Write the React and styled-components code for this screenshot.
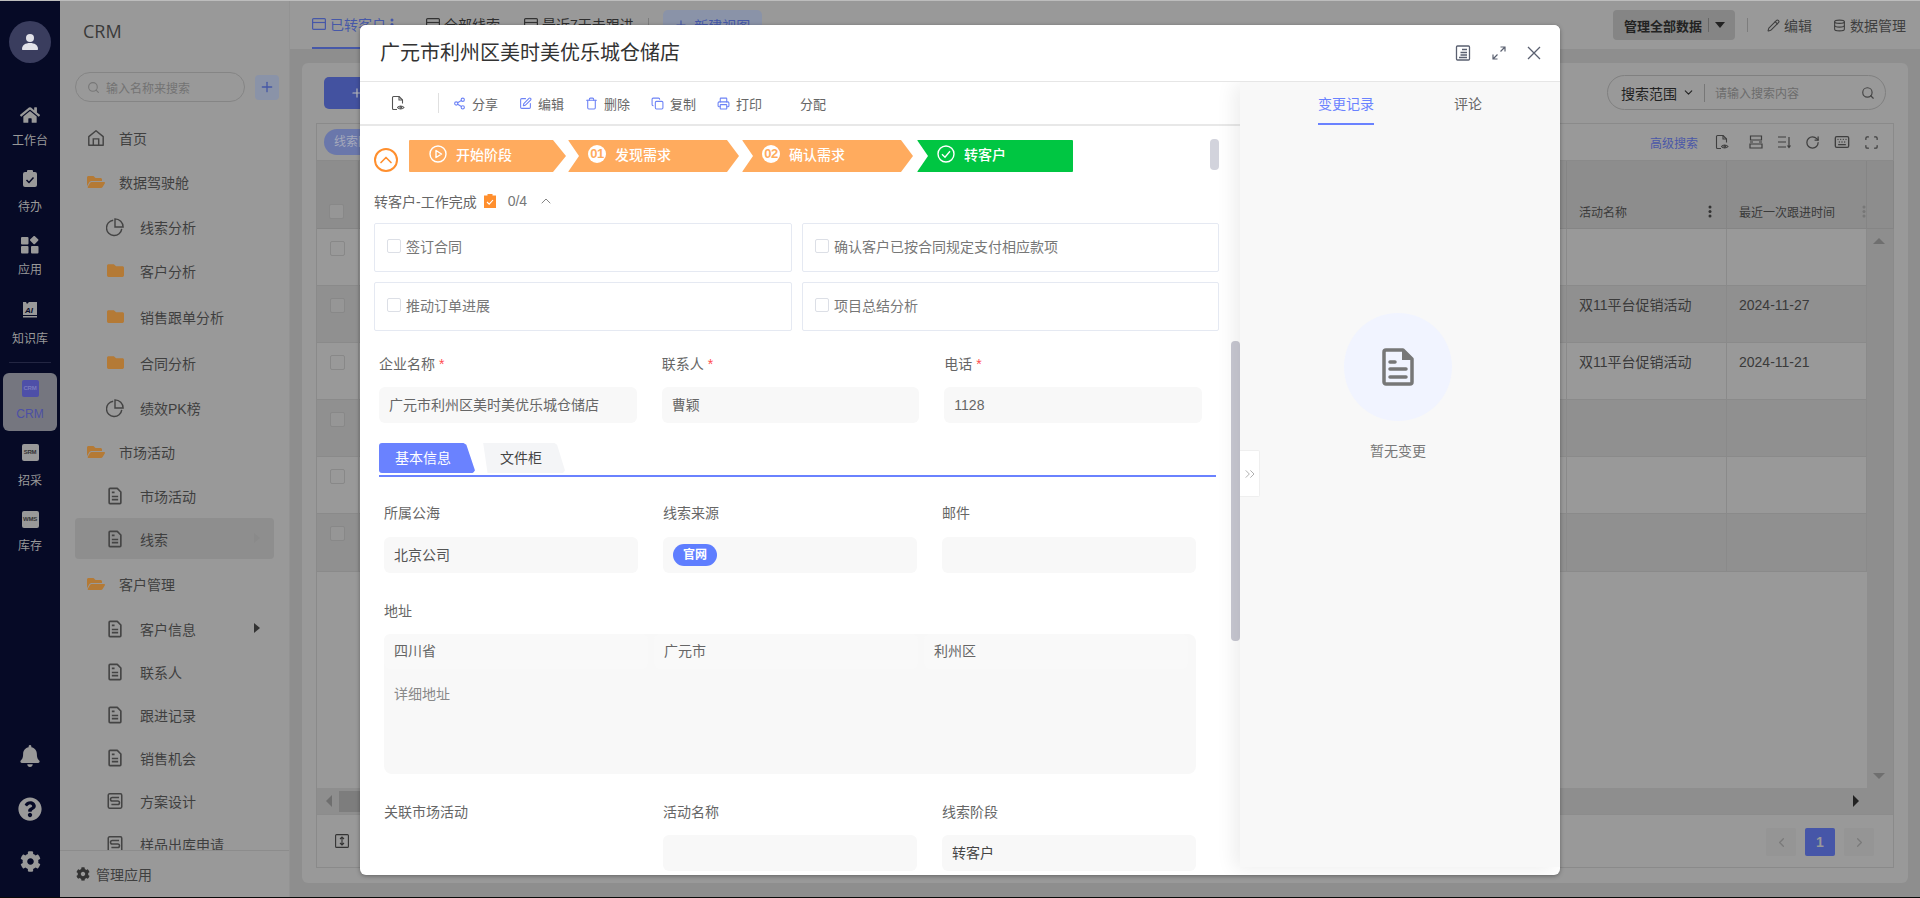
import React from 'react';
import styled, { createGlobalStyle } from 'styled-components';
import {
  FaHome, FaBell, FaQuestionCircle, FaCog, FaFolder, FaFolderOpen,
} from 'react-icons/fa';
import {
  Share2, SquarePen, Trash, Copy, Printer, ChevronUp, ChevronDown, ChevronLeft, ChevronRight,
  Search, Plus, Pencil, Database, ChevronsRight, RotateCw, Keyboard, Scan,
} from 'lucide-react';

const Global = createGlobalStyle`
  html, body { margin: 0; padding: 0; height: 100%; overflow: hidden; }
  body { font-family: "Liberation Sans", "Noto Sans CJK SC", sans-serif; font-size: 14px; color: #333; }
  * { box-sizing: border-box; }
`;

const Page = styled.div`
  position: relative; width: 1920px; height: 898px; display: flex; overflow: hidden;
  background: #8e8e8e; border-top: 1px solid #bdbdbd; border-bottom: 1px solid #0a0a0a;
`;

/* ---------- rail ---------- */
const Rail = styled.nav`
  width: 60px; flex: none; background: #060a26; display: flex; flex-direction: column; align-items: center;
  padding-top: 20px; color: #999;
`;
const Avatar = styled.div`
  width: 42px; height: 42px; border-radius: 50%; background: #3a3d5e; display: flex; align-items: center; justify-content: center;
  margin-bottom: 42px; flex: none;
`;
const RailItem = styled.div`
  width: 54px; height: ${p => p.$h || 65}px; display: flex; flex-direction: column; align-items: center; justify-content: flex-start;
  border-radius: 6px; font-size: 12px; line-height: 16px; color: ${p => p.$active ? '#4c4fa6' : '#999'};
  background: ${p => p.$active ? '#75767f' : 'transparent'}; flex: none;
  padding-top: ${p => p.$pt ?? 0}px; gap: ${p => p.$gap ?? 8}px;
`;
const RailDivider = styled.div`
  width: 42px; height: 1px; background: #232642; margin: 3px 0 10px; flex: none;
`;
const AppIcon = styled.div`
  width: 17px; height: 17px; border-radius: 2px; background: ${p => p.$bg || '#999'}; color: ${p => p.$fg || '#333'};
  font-size: 6px; font-weight: 700; line-height: 17px; text-align: center; letter-spacing: -0.2px; overflow: hidden;
`;
const RailBottom = styled.div`
  margin-top: auto; display: flex; flex-direction: column; align-items: center; gap: 30px; padding-bottom: 25px;
`;

/* ---------- side nav ---------- */
const Side = styled.aside`
  width: 230px; flex: none; background: #999; display: flex; flex-direction: column; height: 100%;
  border-right: 1px solid #939393;
`;
const SideTitle = styled.div`
  font-size: 18px; color: #3a3a3a; line-height: 24px; padding: 18px 0 0 23px; height: 71px; font-family: "Open Sans", "Liberation Sans", sans-serif;
`;
const SearchRow = styled.div`
  display: flex; align-items: center; gap: 10px; padding-left: 15px; height: 30px; flex: none;
`;
const SearchBox = styled.div`
  width: 170px; height: 30px; border: 1px solid #858585; border-radius: 15px; display: flex; align-items: center; gap: 6px;
  padding-left: 11px; color: #737373; font-size: 12px;
`;
const AddBox = styled.div`
  width: 24px; height: 25px; border-radius: 4px; background: #8a93a8; color: #4658a6; display: flex; align-items: center; justify-content: center;
`;
const MenuClip = styled.div`
  flex: 1; overflow: hidden; padding-top: 15px;
`;
const MenuRow = styled.div`
  height: 41px; flex: none; margin: ${p => p.$gap || 0}px 15px 0 15px; padding-left: ${p => p.$sub ? 31 : 12}px; display: flex; align-items: center;
  color: #3f3f3f; border-radius: 4px; background: ${p => p.$active ? '#8e8e8e' : 'transparent'}; position: relative; font-size: 14px;
`;
const MenuIcon = styled.span`
  width: 18px; height: 18px; display: flex; align-items: center; justify-content: center; margin-right: ${p => p.$sub ? 16 : 14}px; flex: none;
`;
const Arrow = styled.span`
  position: absolute; right: 14px; top: 15px; width: 0; height: 0; border-left: 6px solid ${p => p.$c}; border-top: 5px solid transparent; border-bottom: 5px solid transparent;
`;
const SideFoot = styled.div`
  height: 47px; flex: none; border-top: 1px solid #8c8c8c; display: flex; align-items: center; gap: 6px; padding-left: 16px; color: #3f3f3f;
`;

/* ---------- main backdrop ---------- */
const Main = styled.main`
  flex: 1; min-width: 0; display: flex; flex-direction: column; height: 100%;
`;
const TopBar = styled.div`
  height: 48px; flex: none; background: #999; display: flex; align-items: center; padding: 0 14px 0 22px; color: #2e2e2e;
`;
const TopTab = styled.div`
  display: flex; align-items: center; gap: 4px; height: 48px; margin-right: ${p => p.$mr}px; color: ${p => p.$on ? '#4658a8' : '#2e2e2e'};
  border-bottom: 2px solid ${p => p.$on ? '#4658a8' : 'transparent'};
`;
const TopDivider = styled.span`
  width: 1px; height: 14px; background: #7d7d7d; margin: ${p => p.$m};
`;
const NewView = styled.div`
  width: 99px; height: 30px; border-radius: 5px; background: #8a93a8; color: #4658a8; display: flex; align-items: center; justify-content: center; gap: 6px;
`;
const TopRight = styled.div`
  margin-left: auto; display: flex; align-items: center; color: #3f3f3f;
`;
const ManageBtn = styled.div`
  width: 122px; height: 30px; border-radius: 4px; background: #858585; display: flex; align-items: center; padding-left: 11px; color: #222; font-weight: 700; font-size: 13px;
`;
const Caret = styled.span`
  width: 0; height: 0; border-top: 6px solid #222; border-left: 5px solid transparent; border-right: 5px solid transparent; margin-left: 6px;
`;
const ManageSep = styled.span`
  width: 1px; height: 14px; background: #666; margin-left: 6px;
`;
const TopAction = styled.div`
  display: flex; align-items: center; gap: 4px; margin-left: ${p => p.$ml}px;
`;
const CardWrap = styled.div`
  flex: 1; min-height: 0; padding: 14px 12px 14px 12px;
`;
const Card = styled.div`
  height: 100%; background: #999; border-radius: 6px; padding: 0 14px 15px 14px; display: flex; flex-direction: column;
`;
const CardTop = styled.div`
  height: 60px; flex: none; display: flex; align-items: flex-start; justify-content: space-between; padding: 12px 8px 0 8px;
`;
const PrimaryBtn = styled.div`
  width: 110px; height: 32px; margin-top: 2px; border-radius: 5px; background: #4352a0; color: #bbb; padding-left: 26px; display: flex; align-items: center;
`;
const RangeSearch = styled.div`
  width: 279px; height: 35px; border: 1px solid #808080; border-radius: 18px; display: flex; align-items: center; padding-left: 13px; color: #222;
`;
const RangeSep = styled.span`
  width: 1px; height: 18px; background: #777; margin: 0 10px 0 9px;
`;
const Placeholder = styled.span`
  font-size: 12px; color: #6c6c6c; flex: 1;
`;
const Table = styled.div`
  flex: 1; border: 1px solid #8a8a8a; display: flex; flex-direction: column; min-height: 0;
`;
const TableBar = styled.div`
  height: 37px; flex: none; display: flex; align-items: center; padding: 0 14px 0 7px; border-bottom: 1px solid #8a8a8a;
`;
const Pill = styled.div`
  width: 90px; height: 26px; border-radius: 13px; background: #6a77ab; color: #a5a9bb; font-size: 12px; padding-left: 10px; line-height: 26px;
`;
const BarRight = styled.div`
  margin-left: auto; display: flex; align-items: center; gap: 14px; color: #3f3f3f;
`;
const AdvLink = styled.span`
  font-size: 12px; color: #4a57a8; margin-right: 2px;
`;
const BarFile = styled.span`
  display: flex; margin-right: 5px;
`;
const Grid = styled.div`
  display: grid; grid-template-columns: 42px 1fr 160px 140px 26px; flex: none;
`;
const HeadCell = styled.div`
  height: 68px; background: #8d8d8d; border-right: 1px solid #858585; border-bottom: 1px solid #858585; display: flex; align-items: center;
  padding: 34px ${p => p.$pr ?? 14}px 0 12px; font-size: 12px; color: #3a3a3a; justify-content: space-between;
`;
const Cell = styled.div`
  height: ${p => p.$h || 57}px; background: ${p => p.$dark ? '#909090' : '#999'}; border-right: 1px solid #8a8a8a; border-bottom: 1px solid #8a8a8a;
  padding: 9px 0 0 12px; line-height: 20px; color: #3a3a3a;
`;
const ScrollCell = styled.div`
  height: ${p => p.$h || 57}px; background: #8e8e8e;
`;
const CheckCell = styled.div`
  width: 15px; height: 15px; border: 1px solid #888; background: ${p => p.$fill || 'transparent'}; border-radius: 2px; margin: ${p => p.$m || '3px 0 0 1px'};
`;
const TableFill = styled.div`
  flex: 1; position: relative; min-height: 0;
`;
const VTrack = styled.div`
  position: absolute; right: 0; top: -343px; bottom: 0; width: 26px; pointer-events: none;
`;
const VTrackBg = styled.div`
  position: absolute; right: 0; top: 0; bottom: 0; width: 26px; background: #8e8e8e;
`;
const TriUp = styled.span`
  position: absolute; left: 6px; top: 9px; width: 0; height: 0; border-bottom: 6px solid #6f6f6f; border-left: 6px solid transparent; border-right: 6px solid transparent;
`;
const TriDown = styled.span`
  position: absolute; left: 6px; bottom: 9px; width: 0; height: 0; border-top: 6px solid #6f6f6f; border-left: 6px solid transparent; border-right: 6px solid transparent;
`;
const HTrack = styled.div`
  height: 26px; flex: none; background: #8e8e8e; position: relative; display: flex; align-items: center; padding-left: 9px;
`;
const TriLeft = styled.span`
  width: 0; height: 0; border-right: 6px solid #6f6f6f; border-top: 6px solid transparent; border-bottom: 6px solid transparent;
`;
const HThumb = styled.span`
  width: 30px; height: 21px; background: #7d7d7d; margin-left: 7px;
`;
const TriRight = styled.span`
  position: absolute; right: 34px; top: 7px; width: 0; height: 0; border-left: 6px solid #222; border-top: 6px solid transparent; border-bottom: 6px solid transparent;
`;
const TableFoot = styled.div`
  height: 53px; flex: none; display: flex; align-items: center; padding: 0 19px 0 18px; border-top: 1px solid #8c8c8c;
`;
const Pager = styled.div`
  margin-left: auto; display: flex; gap: 9px; padding-top: 2px;
`;
const PageBtn = styled.div`
  width: 30px; height: 28px; border-radius: 2px; background: ${p => p.$on ? '#4656a8' : '#959595'}; color: ${p => p.$on ? '#999' : '#7a7a7a'}; font-weight: 700; font-size: 14px;
  display: flex; align-items: center; justify-content: center;
`;

/* ---------- modal ---------- */
const Modal = styled.section`
  position: absolute; left: 360px; top: 24px; width: 1200px; height: 850px; background: #fff; border-radius: 6px; overflow: hidden;
  display: flex; flex-direction: column; box-shadow: 0 1px 4px rgba(0,0,0,.35);
`;
const ModalHead = styled.header`
  height: 57px; flex: none; border-bottom: 1px solid #e6e6e6; display: flex; align-items: center; padding: 0 19px 0 20px;
  background: #fff; position: relative; z-index: 1;
`;
const ModalTitle = styled.h1`
  margin: 0; font-size: 20px; font-weight: 400; color: #333; line-height: 28px;
`;
const HeadIcons = styled.div`
  margin-left: auto; display: flex; align-items: center; gap: 21px; color: #5a6070;
`;
const ModalBody = styled.div`
  flex: 1; display: flex; min-height: 0;
`;
const LeftPane = styled.div`
  width: 880px; flex: none; position: relative; display: flex; flex-direction: column; overflow: hidden;
`;
const Toolbar = styled.div`
  height: 44px; flex: none; border-bottom: 2px solid #e8e8e8; display: flex; align-items: center; color: #666; font-size: 13px;
  padding-left: 30px;
`;
const ToolSep = styled.span`
  width: 1px; height: 20px; background: #e0e0e0; margin: 0 14px 0 32px;
`;
const ToolBtn = styled.div`
  display: flex; align-items: center; gap: 6px; margin-right: ${p => p.$mr ?? 21}px; color: #666;
`;
const Content = styled.div`
  padding: 14px 0 0 14px;
`;
const StageRow = styled.div`
  display: flex; align-items: center; height: 32px;
`;
const StageToggle = styled.div`
  width: 24px; height: 24px; border-radius: 50%; border: 2px solid #ff8f2e; color: #ff8f2e; display: flex; align-items: center; justify-content: center;
  margin: 7px 11px 0 0; flex: none;
`;
const Step = styled.div`
  width: ${p => p.$w}px; height: 32px; margin-left: ${p => p.$ml || 0}px; background: ${p => p.$c}; color: #fff; font-weight: 500; font-size: 14px; flex: none;
  display: flex; align-items: center; gap: 9px; padding: 0 0 5px 20px; border-radius: 1px;
  clip-path: polygon(${p => p.$shape});
`;
const StepNum = styled.span`
  width: 18px; height: 18px; border-radius: 50%; background: #fff; color: #ffab5e; font-size: 13px; line-height: 18px; text-align: center; letter-spacing: -0.5px; font-weight: 700;
`;
const WorkRow = styled.div`
  height: 20px; margin-top: 19px; display: flex; align-items: center; color: #666;
`;
const WorkCount = styled.span`
  color: #777; margin: 0 11px 0 12px;
`;
const WorkSpacer = styled.span`
  width: 7px;
`;
const TaskGrid = styled.div`
  margin-top: 12px; width: 845px; display: grid; grid-template-columns: 418px 417px; gap: 10px;
`;
const TaskCard = styled.div`
  height: 49px; border: 1px solid #e5e9f2; border-radius: 2px; display: flex; align-items: center; padding: 0 0 4px 12px; gap: 5px; color: #777;
`;
const Check = styled.span`
  width: 14px; height: 14px; border: 1px solid #dcdfe6; border-radius: 2px; background: #fff;
`;
const Fields = styled.div`
  margin: ${p => p.$mt}px 0 0 ${p => p.$ml}px; width: ${p => p.$w}px; display: grid; grid-template-columns: repeat(3, 1fr); column-gap: 25px;
`;
const Field = styled.div`
  min-width: 0;
`;
const Label = styled.div`
  height: 20px; line-height: 18px; color: #666; margin-bottom: ${p => p.$mb || 12}px;
`;
const Star = styled.span`
  color: #ff4d4f; margin-left: 4px;
`;
const Input = styled.div`
  height: 36px; background: #f8f8f8; border-radius: 6px; padding-left: ${p => p.$pl || 10}px; line-height: 35px; color: ${p => p.$c || '#666'};
  display: flex; align-items: center;
`;
const Empty = styled.div`
  height: 36px;
`;
const Tag = styled.span`
  width: 44px; height: 22px; border-radius: 11px; background: #5f7eff; color: #fff; font-size: 12px; font-weight: 700; line-height: 22px; text-align: center;
`;
const TabsBar = styled.div`
  margin: 20px 0 0 5px; width: 837px; height: 34px; border-bottom: 2px solid #6a82ff; display: flex; gap: 2px;
`;
const InfoTab = styled.div`
  height: 30px; width: ${p => p.$w}px; background: ${p => p.$on ? '#6a82ff' : '#f4f5f7'}; color: ${p => p.$on ? '#fff' : '#444'}; line-height: 30px;
  padding-left: ${p => p.$pl}px; border-radius: 3px 5px 3px 3px; font-size: 14px;
  clip-path: ${p => p.$on
    ? 'polygon(0 0, 88% 0, 91% 6%, 100% 92%, 98% 100%, 0 100%)'
    : 'polygon(7% 0, 88% 0, 91% 6%, 100% 92%, 98% 100%, 12% 100%)'};
`;
const Address = styled.div`
  width: 812px; height: 140px; background: #f8f8f8; border-radius: 8px;
`;
const AddressRow = styled.div`
  height: 35px; display: grid; grid-template-columns: repeat(3, 264px); gap: 6px; color: #666;
`;
const AddressCell = styled.div`
  background: #f9f9f9; padding-left: 10px; line-height: 35px; border-radius: 6px;
`;
const AddressLine = styled.div`
  padding: 15px 0 0 10px; line-height: 20px; color: #888;
`;
const AddressBlock = styled.div`
  margin: 29px 0 0 10px;
`;
const StageThumb = styled.div`
  position: absolute; left: 850px; top: 57px; width: 9px; height: 31px; border-radius: 4px; background: #d2d3dc;
`;
const BodyThumb = styled.div`
  position: absolute; left: 871px; top: 259px; width: 9px; height: 300px; border-radius: 4px; background: #c8c8d2;
`;
const RightPane = styled.aside`
  width: 320px; flex: none; height: 785px; background: #f8f8f8; position: relative; box-shadow: -6px 2px 18px rgba(0,0,0,.07);
`;
const PanelTabs = styled.div`
  height: 43px; display: flex; padding-left: 78px; gap: 80px;
`;
const PanelTab = styled.div`
  height: 43px; line-height: 44px; color: ${p => p.$on ? '#6a82ff' : '#666'}; border-bottom: 2px solid ${p => p.$on ? '#6a82ff' : 'transparent'};
`;
const EmptyState = styled.div`
  display: flex; flex-direction: column; align-items: center; padding: 188px 4px 0 0;
`;
const EmptyCircle = styled.div`
  width: 108px; height: 108px; border-radius: 50%; background: #f1f4ff; display: flex; align-items: center; justify-content: center;
`;
const EmptyText = styled.div`
  margin-top: 20px; line-height: 20px; color: #777;
`;
const Handle = styled.div`
  position: absolute; left: 0; top: 368px; width: 20px; height: 47px; background: #fff; border: 1px solid #efefef; border-left: 0; border-radius: 0 2px 2px 0;
  display: flex; align-items: center; justify-content: center; color: #888;
`;

/* ---------- drawn icons ---------- */
const Doc = ({ size = 20, c = '#444', sw = 1.8 }) => (
  <svg width={size} height={size} viewBox="0 0 20 20" fill="none" stroke={c} strokeWidth={sw}>
    <path d="M4.5 1.5h8l4 4v12a1 1 0 0 1-1 1h-11a1 1 0 0 1-1-1v-15a1 1 0 0 1 1-1z" strokeLinejoin="round" />
    <path d="M6.5 6h3M6.5 10.5h7M6.5 14h7" />
  </svg>
);
const Flow = ({ size = 20, c = '#444' }) => (
  <svg width={size} height={size} viewBox="0 0 20 20" fill="none" stroke={c} strokeWidth="1.7">
    <rect x="2.5" y="2" width="15" height="16" rx="1.5" />
    <path d="M14.5 6H7a1.8 1.8 0 0 0 0 4h6a1.8 1.8 0 0 1 0 4H6" />
  </svg>
);
const Pie = ({ c = '#444' }) => (
  <svg width="20" height="20" viewBox="0 0 20 20" fill="none" stroke={c} strokeWidth="1.6">
    <path d="M8 2.5a8.5 8.5 0 1 0 9.5 9.5" />
    <path d="M10 1a9 9 0 0 1 9 9h-9z" />
  </svg>
);
const HouseLine = () => (
  <svg width="20" height="20" viewBox="0 0 20 20" fill="none" stroke="#444" strokeWidth="1.6">
    <path d="M2 8.5L10 2l8 6.5V18H2z" strokeLinejoin="round" />
    <path d="M7 18v-7h6v7" />
  </svg>
);
const User = () => (
  <svg width="18" height="18" viewBox="0 0 18 18" fill="#e2e2e8">
    <circle cx="9" cy="5" r="4" />
    <path d="M1 16c0-4 3.5-6 8-6s8 2 8 6c0 .6-.4 1-1 1H2c-.6 0-1-.4-1-1z" />
  </svg>
);
const TodoIcon = () => (
  <svg width="16" height="18" viewBox="0 0 16 18">
    <rect x="1" y="2" width="14" height="15" rx="2" fill="#999" />
    <rect x="5" y="0" width="6" height="4" rx="1" fill="#999" />
    <path d="M4.5 10l2.5 2.5 4.5-5" stroke="#060a26" strokeWidth="1.5" fill="none" />
  </svg>
);
const AppsIcon = () => (
  <svg width="18" height="18" viewBox="0 0 18 18" fill="#999">
    <rect x="0" y="1" width="7.5" height="7.5" rx="1" />
    <rect x="10" y="0.8" width="6.5" height="6.5" rx="1" transform="rotate(45 13.2 4)" />
    <rect x="0" y="10" width="7.5" height="7.5" rx="1" />
    <rect x="10" y="10" width="7.5" height="7.5" rx="1" />
  </svg>
);
const BookAI = () => (
  <svg width="16" height="17" viewBox="0 0 16 17">
    <path d="M1 1h3l1 2 2-2h8v13H1z" fill="#999" />
    <rect x="1" y="15" width="14" height="1.5" fill="#999" />
    <text x="3" y="12" fontSize="8" fontWeight="700" fontStyle="italic" fill="#060a26" fontFamily="Liberation Sans">AI</text>
  </svg>
);
const FileEye = ({ c = '#555', size = 16 }) => (
  <svg width={size} height={size} viewBox="0 0 16 16" fill="none" stroke={c} strokeWidth="1.1">
    <path d="M7 14.5H3.5a1 1 0 0 1-1-1v-11a1 1 0 0 1 1-1h5.5l3.5 3.5v3.5" strokeLinejoin="round" />
    <path d="M9 1.5V5h3.5" />
    <path d="M7.5 12.5c1.2-2 5-2 6.5 0-1.5 2-5.3 2-6.5 0z" />
    <circle cx="10.8" cy="12.5" r=".9" />
  </svg>
);
const PlayRing = () => (
  <svg width="18" height="18" viewBox="0 0 18 18" fill="none" stroke="#fff" strokeWidth="1.4">
    <circle cx="9" cy="9" r="8" />
    <path d="M7 5.5L12.5 9 7 12.5z" strokeLinejoin="round" />
  </svg>
);
const CheckRing = () => (
  <svg width="18" height="18" viewBox="0 0 18 18" fill="none" stroke="#fff" strokeWidth="1.4">
    <circle cx="9" cy="9" r="8" />
    <path d="M5 9.2l3 3 5-6" />
  </svg>
);
const Clipboard = () => (
  <svg width="12" height="14" viewBox="0 0 12 14">
    <rect x="0" y="1.5" width="12" height="12.5" fill="#ff8f2e" />
    <rect x="3.5" y="0" width="5" height="3" fill="#ff8f2e" />
    <path d="M3 8l2.2 2.2L9 6" stroke="#fff" strokeWidth="1.1" fill="none" />
  </svg>
);
const Notes = () => (
  <svg width="16" height="16" viewBox="0 0 16 16" fill="none" stroke="#5a6070" strokeWidth="1.3">
    <rect x="1.5" y="1" width="13" height="14" rx="1" />
    <path d="M7 4.5h5M5.5 7.5h6.5M5.5 10h6.5M4 12.5h8" />
  </svg>
);
const Expand = () => (
  <svg width="14" height="14" viewBox="0 0 14 14" fill="none" stroke="#5a6070" strokeWidth="1.2">
    <path d="M8.5 1h4.5v4.5M13 1L8.5 5.5M5.5 13H1V8.5M1 13l4.5-4.5" />
  </svg>
);
const Close = () => (
  <svg width="14" height="14" viewBox="0 0 14 14" fill="none" stroke="#5a6070" strokeWidth="1.3">
    <path d="M1 1l12 12M13 1L1 13" />
  </svg>
);
const EmptyDoc = () => (
  <svg width="32" height="38" viewBox="0 0 32 38" fill="none" stroke="#777" strokeWidth="3.5">
    <path d="M4 2h17l9 9v23a2 2 0 0 1-2 2H4a2 2 0 0 1-2-2V4a2 2 0 0 1 2-2z" strokeLinejoin="round" />
    <path d="M21 3v8h8" strokeWidth="2" fill="#777" />
    <path d="M8 14h5M8 21h16M8 29h16" strokeLinecap="round" />
  </svg>
);
const ViewIcon = ({ c = '#333' }) => (
  <svg width="14" height="12" viewBox="0 0 14 12" fill="none" stroke={c} strokeWidth="1.2">
    <rect x=".6" y=".6" width="12.8" height="10.8" rx="1" />
    <path d="M.6 4.5h12.8" />
  </svg>
);
const RowsIcon = () => (
  <svg width="14" height="14" viewBox="0 0 14 14" fill="none" stroke="#3f3f3f" strokeWidth="1.2">
    <path d="M1.5 1h11v4h-11zM1 13h12v-4H1zM1 7h3M10 7h3" />
  </svg>
);
const ColsIcon = () => (
  <svg width="14" height="14" viewBox="0 0 14 14" fill="none" stroke="#3f3f3f" strokeWidth="1.2">
    <path d="M1 2h8M1 7h8M1 12h8M12 2v10M10.5 10.5L12 12.5l1.5-2" />
  </svg>
);
const HeightIcon = () => (
  <svg width="14" height="14" viewBox="0 0 14 14" fill="none" stroke="#333" strokeWidth="1.1">
    <rect x=".6" y=".6" width="12.8" height="12.8" rx="1" />
    <path d="M7 3v8M5 5l2-2 2 2M5 9l2 2 2-2" />
  </svg>
);
const Dots = ({ c = '#333' }) => (
  <svg width="4" height="13" viewBox="0 0 4 13" fill={c}>
    <circle cx="2" cy="2" r="1.5" /><circle cx="2" cy="6.5" r="1.5" /><circle cx="2" cy="11" r="1.5" />
  </svg>
);

const menu = [
  { t: '首页', i: 'home', g: 0 },
  { t: '数据驾驶舱', i: 'open', g: 3 },
  { t: '线索分析', i: 'pie', sub: 1, g: 4 },
  { t: '客户分析', i: 'folder', sub: 1, g: 3 },
  { t: '销售跟单分析', i: 'folder', sub: 1, g: 5 },
  { t: '合同分析', i: 'folder', sub: 1, g: 5 },
  { t: '绩效PK榜', i: 'pie', sub: 1, g: 4 },
  { t: '市场活动', i: 'open', g: 3 },
  { t: '市场活动', i: 'doc', sub: 1, g: 3 },
  { t: '线索', i: 'doc', sub: 1, g: 2, active: 1, arrow: '#8a8a8a' },
  { t: '客户管理', i: 'open', g: 4 },
  { t: '客户信息', i: 'doc', sub: 1, g: 4, arrow: '#333' },
  { t: '联系人', i: 'doc', sub: 1, g: 2 },
  { t: '跟进记录', i: 'doc', sub: 1, g: 2 },
  { t: '销售机会', i: 'doc', sub: 1, g: 2 },
  { t: '方案设计', i: 'flow', sub: 1, g: 2 },
  { t: '样品出库申请', i: 'flow', sub: 1, g: 2 },
];
const iconFor = (i) => {
  if (i === 'home') return <HouseLine />;
  if (i === 'open') return <FaFolderOpen size={20} color="#b47a36" />;
  if (i === 'folder') return <FaFolder size={17} color="#b47a36" />;
  if (i === 'pie') return <Pie />;
  if (i === 'flow') return <Flow />;
  return <Doc />;
};

const rows = [
  { dark: 0, a: '', b: '', h: 57 },
  { dark: 1, a: '双11平台促销活动', b: '2024-11-27', h: 57 },
  { dark: 0, a: '双11平台促销活动', b: '2024-11-21', h: 57 },
  { dark: 1, a: '', b: '', h: 57 },
  { dark: 0, a: '', b: '', h: 57 },
  { dark: 1, a: '', b: '', h: 58 },
];

export default function App() {
  return (
    <Page>
      <Global />
      <Rail>
        <Avatar><User /></Avatar>
        <RailItem $h={65}><FaHome size={20} color="#999" />工作台</RailItem>
        <RailItem $h={66} $gap={11}><TodoIcon />待办</RailItem>
        <RailItem $h={65}><AppsIcon />应用</RailItem>
        <RailItem $h={58} $gap={13}><BookAI />知识库</RailItem>
        <RailDivider />
        <RailItem $h={58} $active $pt={7} $gap={9}><AppIcon $bg="#4e4fa8" $fg="#7a7bbd">CRM</AppIcon>CRM</RailItem>
        <RailItem $h={65} $pt={13} $gap={12}><AppIcon>SRM</AppIcon>招采</RailItem>
        <RailItem $h={65} $pt={15} $gap={10}><AppIcon>WMS</AppIcon>库存</RailItem>
        <RailBottom>
          <FaBell size={22} color="#999" />
          <FaQuestionCircle size={24} color="#999" />
          <FaCog size={21} color="#999" />
        </RailBottom>
      </Rail>

      <Side>
        <SideTitle>CRM</SideTitle>
        <SearchRow>
          <SearchBox><Search size={13} color="#777" />输入名称来搜索</SearchBox>
          <AddBox><Plus size={16} /></AddBox>
        </SearchRow>
        <MenuClip>
          {menu.map((m, k) => (
            <MenuRow key={k} $sub={m.sub} $gap={m.g} $active={m.active}>
              <MenuIcon $sub={m.sub}>{iconFor(m.i)}</MenuIcon>
              {m.t}
              {m.arrow && <Arrow $c={m.arrow} />}
            </MenuRow>
          ))}
        </MenuClip>
        <SideFoot><FaCog size={14} color="#333" />管理应用</SideFoot>
      </Side>

      <Main>
        <TopBar>
          <TopTab $on $mr={32}><ViewIcon c="#4658a8" />已转客户 <Dots c="#4658a8" /></TopTab>
          <TopTab $mr={24}><ViewIcon />全部线索</TopTab>
          <TopTab $mr={0}><ViewIcon />最近7天未跟进</TopTab>
          <TopDivider $m="0 14px 0 14px" />
          <NewView><Plus size={14} />新建视图</NewView>
          <TopRight>
            <ManageBtn>管理全部数据<ManageSep /><Caret /></ManageBtn>
            <TopDivider $m="0 0 0 12px" />
            <TopAction $ml={19}><Pencil size={13} />编辑</TopAction>
            <TopAction $ml={21}><Database size={13} />数据管理</TopAction>
          </TopRight>
        </TopBar>
        <CardWrap>
          <Card>
            <CardTop>
              <PrimaryBtn><Plus size={14} /></PrimaryBtn>
              <RangeSearch>
                搜索范围
                <ChevronDown size={13} style={{ marginLeft: 5 }} />
                <RangeSep />
                <Placeholder>请输入搜索内容</Placeholder>
                <Search size={14} color="#444" style={{ marginRight: 10 }} />
              </RangeSearch>
            </CardTop>
            <Table>
              <TableBar>
                <Pill>线索阶段</Pill>
                <BarRight>
                  <AdvLink>高级搜索</AdvLink>
                  <BarFile><FileEye c="#3f3f3f" /></BarFile>
                  <RowsIcon />
                  <ColsIcon />
                  <RotateCw size={15} />
                  <Keyboard size={16} />
                  <Scan size={15} />
                </BarRight>
              </TableBar>
              <Grid>
                <HeadCell><CheckCell $fill="#969696" $m="0" /></HeadCell>
                <HeadCell />
                <HeadCell>活动名称<Dots /></HeadCell>
                <HeadCell $pr={0}>最近一次跟进时间<Dots c="#777" /></HeadCell>
                <HeadCell />
                {rows.map((r, k) => (
                  <React.Fragment key={k}>
                    <Cell $dark={r.dark} $h={r.h}><CheckCell $fill={r.dark ? '#969696' : ''} /></Cell>
                    <Cell $dark={r.dark} $h={r.h} />
                    <Cell $dark={r.dark} $h={r.h}>{r.a}</Cell>
                    <Cell $dark={r.dark} $h={r.h}>{r.b}</Cell>
                    <ScrollCell $h={r.h} />
                  </React.Fragment>
                ))}
              </Grid>
              <TableFill>
                <VTrackBg />
                <VTrack><TriUp /><TriDown /></VTrack>
              </TableFill>
              <HTrack><TriLeft /><HThumb /><TriRight /></HTrack>
              <TableFoot>
                <HeightIcon />
                <Pager>
                  <PageBtn><ChevronLeft size={15} /></PageBtn>
                  <PageBtn $on>1</PageBtn>
                  <PageBtn><ChevronRight size={15} /></PageBtn>
                </Pager>
              </TableFoot>
            </Table>
          </Card>
        </CardWrap>
      </Main>

      <Modal>
        <ModalHead>
          <ModalTitle>广元市利州区美时美优乐城仓储店</ModalTitle>
          <HeadIcons><Notes /><Expand /><Close /></HeadIcons>
        </ModalHead>
        <ModalBody>
          <LeftPane>
            <Toolbar>
              <FileEye />
              <ToolSep />
              <ToolBtn><Share2 size={13} color="#6d83f6" />分享</ToolBtn>
              <ToolBtn><SquarePen size={13} color="#6d83f6" />编辑</ToolBtn>
              <ToolBtn><Trash size={13} color="#6d83f6" />删除</ToolBtn>
              <ToolBtn><Copy size={13} color="#6d83f6" />复制</ToolBtn>
              <ToolBtn $mr={38}><Printer size={13} color="#6d83f6" />打印</ToolBtn>
              <ToolBtn $mr={0}>分配</ToolBtn>
            </Toolbar>
            <Content>
              <StageRow>
                <StageToggle><ChevronUp size={20} strokeWidth={2} /></StageToggle>
                <Step $w={157} $c="#ffab5e" $shape="0 0, 144px 0, 100% 50%, 144px 100%, 0 100%"><PlayRing />开始阶段</Step>
                <Step $w={171} $ml={2} $c="#ffab5e" $shape="0 0, 159px 0, 100% 50%, 159px 100%, 0 100%, 11px 50%"><StepNum>01</StepNum>发现需求</Step>
                <Step $w={171} $ml={3} $c="#ffab5e" $shape="0 0, 159px 0, 100% 50%, 159px 100%, 0 100%, 11px 50%"><StepNum>02</StepNum>确认需求</Step>
                <Step $w={156} $ml={4} $c="#00c642" $shape="0 0, 100% 0, 100% 100%, 0 100%, 11px 50%"><CheckRing />转客户</Step>
              </StageRow>
              <WorkRow>
                转客户-工作完成<WorkSpacer /><Clipboard /><WorkCount>0/4</WorkCount><ChevronUp size={16} strokeWidth={1.2} />
              </WorkRow>
              <TaskGrid>
                <TaskCard><Check />签订合同</TaskCard>
                <TaskCard><Check />确认客户已按合同规定支付相应款项</TaskCard>
                <TaskCard><Check />推动订单进展</TaskCard>
                <TaskCard><Check />项目总结分析</TaskCard>
              </TaskGrid>
              <Fields $mt={24} $ml={5} $w={823}>
                <Field><Label>企业名称<Star>*</Star></Label><Input>广元市利州区美时美优乐城仓储店</Input></Field>
                <Field><Label>联系人<Star>*</Star></Label><Input>曹颖</Input></Field>
                <Field><Label>电话<Star>*</Star></Label><Input>1128</Input></Field>
              </Fields>
              <TabsBar>
                <InfoTab $on $w={96} $pl={16}>基本信息</InfoTab>
                <InfoTab $w={88} $pl={23}>文件柜</InfoTab>
              </TabsBar>
              <Fields $mt={27} $ml={10} $w={812}>
                <Field><Label $mb={13}>所属公海</Label><Input $c="#555">北京公司</Input></Field>
                <Field><Label $mb={13}>线索来源</Label><Input><Tag>官网</Tag></Input></Field>
                <Field><Label $mb={13}>邮件</Label><Input /></Field>
              </Fields>
              <AddressBlock>
                <Label>地址</Label>
                <Address>
                  <AddressRow>
                    <AddressCell>四川省</AddressCell>
                    <AddressCell>广元市</AddressCell>
                    <AddressCell>利州区</AddressCell>
                  </AddressRow>
                  <AddressLine>详细地址</AddressLine>
                </Address>
              </AddressBlock>
              <Fields $mt={29} $ml={10} $w={812}>
                <Field><Label>关联市场活动</Label><Empty /></Field>
                <Field><Label>活动名称</Label><Input /></Field>
                <Field><Label>线索阶段</Label><Input $c="#444">转客户</Input></Field>
              </Fields>
            </Content>
            <StageThumb />
            <BodyThumb />
          </LeftPane>
          <RightPane>
            <PanelTabs>
              <PanelTab $on>变更记录</PanelTab>
              <PanelTab>评论</PanelTab>
            </PanelTabs>
            <EmptyState>
              <EmptyCircle><EmptyDoc /></EmptyCircle>
              <EmptyText>暂无变更</EmptyText>
            </EmptyState>
            <Handle><ChevronsRight size={16} strokeWidth={1} /></Handle>
          </RightPane>
        </ModalBody>
      </Modal>
    </Page>
  );
}
